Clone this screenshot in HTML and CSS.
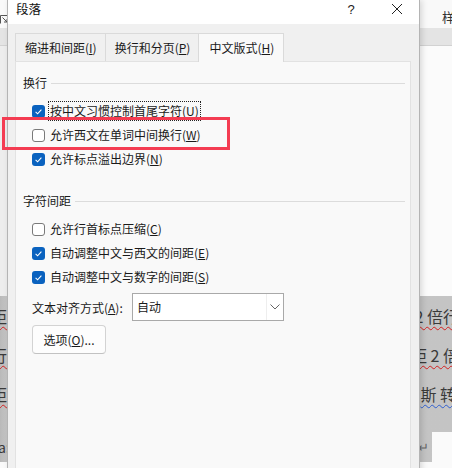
FILE: index.html
```html
<!DOCTYPE html>
<html lang="zh-CN">
<head>
<meta charset="utf-8">
<title>段落</title>
<link rel="stylesheet" href="styles.css">
</head>
<body>
<!-- Word document behind the dialog -->
<div class="doc">
  <div class="ribbon-top">
    <svg class="launcher" width="9" height="9" viewBox="0 0 9 9"><path d="M0.5 8.5V0.5H8.5" fill="none" stroke="#555"/><path d="M2.5 2.5L7 7M7 4V7H4" fill="none" stroke="#555"/></svg>
    <span class="styles-label">样式</span>
  </div>
  <div class="ribbon-band"></div>
  <div class="page"></div>
  <div class="selection">
    <div class="doc-line"><span class="frag-left red-wave">距</span><span class="frag-right red-wave">2 倍行</span></div>
    <div class="doc-line"><span class="frag-left red-wave">行</span><span class="frag-right red-wave">距 2 倍</span></div>
    <div class="doc-line"><span class="frag-left red-wave">距</span><span class="frag-right blue-wave">斯 转</span></div>
    <div class="doc-line last">
      <div class="last-sel"><span class="frag-left small">a:</span><span class="para-mark">↵</span></div>
      <div class="last-page"></div>
    </div>
  </div>
  <div class="page-bottom"></div>
</div>

<!-- Paragraph dialog -->
<div class="dialog">
  <div class="titlebar">
    <span class="title">段落</span>
    <span class="tb-btn help">?</span>
    <span class="tb-btn close">
      <svg width="12" height="12" viewBox="0 0 12 12"><path d="M1 1L11 11M11 1L1 11" stroke="#222" stroke-width="1"/></svg>
    </span>
  </div>
  <div class="tabs">
    <div class="tab">缩进和间距(<u>I</u>)</div>
    <div class="tab">换行和分页(<u>P</u>)</div>
    <div class="tab active">中文版式(<u>H</u>)</div>
  </div>
  <div class="panel">
    <div class="group-title"><span>换行</span><i></i></div>
    <div class="check-row">
      <span class="box checked"><svg width="13" height="13" viewBox="0 0 13 13"><path d="M3.6 6.9L5.6 8.8L9.4 4.6" fill="none" stroke="#fff" stroke-width="1.1"/></svg></span>
      <span class="label focus">按中文习惯控制首尾字符(<u>U</u>)</span>
    </div>
    <div class="check-row">
      <span class="box"></span>
      <span class="label">允许西文在单词中间换行(<u>W</u>)</span>
    </div>
    <div class="check-row">
      <span class="box checked"><svg width="13" height="13" viewBox="0 0 13 13"><path d="M3.6 6.9L5.6 8.8L9.4 4.6" fill="none" stroke="#fff" stroke-width="1.1"/></svg></span>
      <span class="label">允许标点溢出边界(<u>N</u>)</span>
    </div>

    <div class="group-title second"><span>字符间距</span><i></i></div>
    <div class="check-row">
      <span class="box"></span>
      <span class="label">允许行首标点压缩(<u>C</u>)</span>
    </div>
    <div class="check-row">
      <span class="box checked"><svg width="13" height="13" viewBox="0 0 13 13"><path d="M3.6 6.9L5.6 8.8L9.4 4.6" fill="none" stroke="#fff" stroke-width="1.1"/></svg></span>
      <span class="label">自动调整中文与西文的间距(<u>E</u>)</span>
    </div>
    <div class="check-row">
      <span class="box checked"><svg width="13" height="13" viewBox="0 0 13 13"><path d="M3.6 6.9L5.6 8.8L9.4 4.6" fill="none" stroke="#fff" stroke-width="1.1"/></svg></span>
      <span class="label">自动调整中文与数字的间距(<u>S</u>)</span>
    </div>

    <div class="field-row">
      <span class="field-label">文本对齐方式(<u>A</u>):</span>
      <div class="select">
        <span class="select-value">自动</span>
        <span class="select-arrow"><svg width="10" height="6" viewBox="0 0 10 6"><path d="M0.5 0.5L5 5L9.5 0.5" fill="none" stroke="#666" stroke-width="1"/></svg></span>
      </div>
    </div>
    <div class="button">选项(<u>O</u>)...</div>
  </div>
</div>

<!-- red annotation frame -->
<div class="mark-frame"></div>
</body>
</html>
```

FILE: styles.css
```css
* { box-sizing: border-box; }

html, body {
  margin: 0;
  width: 452px;
  height: 468px;
  overflow: hidden;
}

body {
  position: relative;
  font-family: "Noto Sans CJK SC", "Microsoft YaHei", sans-serif;
  font-size: 12px;
  color: #1a1a1a;
  background: #fafafa;
}

u { text-decoration: underline; text-underline-offset: 1px; }

/* ---------- document behind ---------- */
.doc {
  display: flex;
  flex-direction: column;
  height: 468px;
}

.ribbon-top {
  height: 28px;
  background: #f9f9f9;
  display: flex;
  justify-content: space-between;
  align-items: flex-start;
}

.launcher { margin-top: 15px; margin-left: 0; }

.styles-label {
  font-size: 13px;
  line-height: 18px;
  margin-top: 8px;
  margin-right: -16px;
  color: #333;
}

.ribbon-band {
  height: 18px;
  background: #e4e4e4;
  border-bottom: 1px solid #d2d2d2;
}

.page {
  height: 250px;
  background: linear-gradient(to right, #ededed 0 7px, #fbfbfb 7px);
}

.selection {
  height: 166px;
  background: linear-gradient(to right, #b9b9b9 0, #c6c6c6 7px, #c4c4c4 100%);
  display: flex;
  flex-direction: column;
  padding-top: 9px;
}

.doc-line {
  height: 39px;
  display: flex;
  justify-content: space-between;
  align-items: flex-start;
  font-size: 16px;
  line-height: 22px;
  color: #3a3a3a;
}

.frag-left { margin-left: -9px; }
.frag-right { margin-right: -7px; white-space: pre; }

.red-wave {
  text-decoration: underline wavy #d42020;
  text-decoration-thickness: 1px;
  text-underline-offset: 3px;
}
.blue-wave {
  text-decoration: underline wavy #2f5fd0;
  text-decoration-thickness: 1px;
  text-underline-offset: 3px;
  margin-right: -4px;
}

.doc-line.last {
  height: auto;
  flex: 1;
  margin-top: 10px;
  align-items: stretch;
}
.last-sel {
  width: 432px;
  display: flex;
  justify-content: space-between;
  align-items: center;
}
.frag-left.small { margin-left: -2px; font-size: 14px; }
.para-mark { font-size: 13px; color: #666; padding-right: 3px; }
.last-page { flex: 1; background: #fafafa; }

.page-bottom { height: 6px; background: #fafafa; }

/* ---------- dialog ---------- */
.dialog {
  position: absolute;
  left: 7px;
  top: 0;
  width: 413px;
  height: 490px;
  background: #f0f0f0;
  border: 1px solid #b4b4b4;
  border-top: none;
  box-shadow: 2px 0 6px rgba(0, 0, 0, 0.14);
  display: flex;
  flex-direction: column;
}

.titlebar {
  height: 24px;
  background: #ffffff;
  display: flex;
  align-items: flex-start;
}
.title {
  flex: 1;
  padding-left: 8px;
  line-height: 18px;
  font-size: 12.5px;
  color: #111;
}
.tb-btn {
  width: 46px;
  height: 18px;
  display: flex;
  justify-content: center;
  align-items: center;
  font-family: "Segoe UI", "Liberation Sans", sans-serif;
  font-size: 13px;
  color: #222;
}
.tb-btn.close { width: 45px; }

.tabs {
  display: flex;
  margin: 9px 0 0 7px;
  height: 28px;
  position: relative;
  z-index: 1;
}
.tab {
  padding: 0 8px 0 9px;
  line-height: 27px;
  border: 1px solid #dadada;
  border-bottom: none;
  margin-right: -1px;
  background: #f0f0f0;
  color: #1a1a1a;
  white-space: nowrap;
}
.tab.active {
  background: #f9f9f9;
  padding: 0 9px 0 10px;
  height: 29px;
}

.panel {
  flex: 1;
  margin: 0 8px 0 7px;
  background: #f9f9f9;
  border: 1px solid #e2e2e2;
  padding: 13px 5px 0 7px;
}

.group-title {
  display: flex;
  align-items: center;
  gap: 4px;
  height: 16px;
  line-height: 16px;
}
.group-title i {
  flex: 1;
  height: 1px;
  background: #dcdcdc;
}
.group-title.second { margin-top: 22px; }

.check-row {
  height: 24px;
  display: flex;
  align-items: center;
  padding-left: 9px;
}
.group-title + .check-row { margin-top: 8px; }

.box {
  width: 13px;
  height: 13px;
  border: 1px solid #7a7a7a;
  border-radius: 3px;
  background: #fff;
  flex: none;
  display: flex;
}
.box.checked {
  border: none;
  background: #0a62bf;
}

.label {
  margin-left: 3px;
  padding: 0 1px;
  line-height: 18px;
  border: 1px solid transparent;
  white-space: nowrap;
}
.label.focus { border: 1px dotted #222; }

.field-row {
  display: flex;
  align-items: center;
  margin-top: 4px;
  padding-left: 9px;
  height: 28px;
}
.field-label { width: 100px; white-space: nowrap; }
.select {
  width: 152px;
  height: 28px;
  border: 1px solid #a9a9a9;
  background: #fff;
  display: flex;
  align-items: stretch;
}
.select-value {
  flex: 1;
  padding-left: 4px;
  line-height: 26px;
}
.select-arrow {
  width: 17px;
  border-left: 1px solid #eeeeee;
  display: flex;
  align-items: center;
  justify-content: center;
}

.button {
  margin: 4px 0 0 9px;
  width: 74px;
  height: 29px;
  background: #fdfdfd;
  border: 1px solid #d3d3d3;
  border-bottom-color: #c2c2c2;
  border-radius: 4px;
  display: flex;
  align-items: center;
  justify-content: center;
  white-space: nowrap;
}

/* annotation frame over the second option */
.mark-frame {
  position: absolute;
  left: 2px;
  top: 117px;
  width: 228px;
  height: 33px;
  border: 3px solid #f43c52;
}
```
